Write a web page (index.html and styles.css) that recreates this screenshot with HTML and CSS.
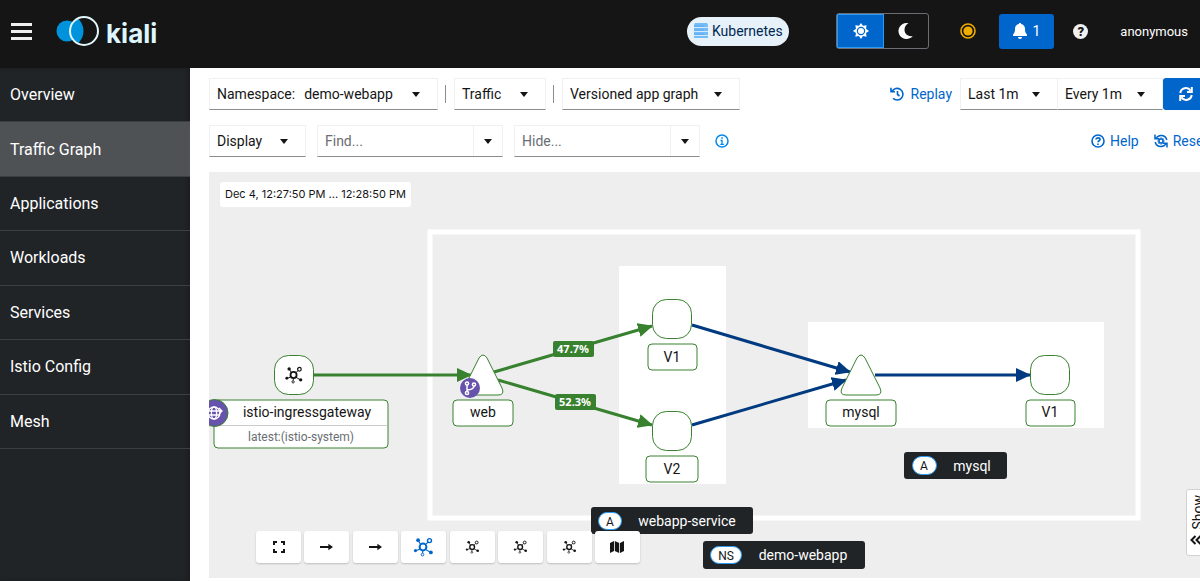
FILE: index.html
```html
<!DOCTYPE html>
<html lang="en">
<head>
    <meta charset="UTF-8">
    <meta name="viewport" content="width=device-width, initial-scale=1.0">
    <title>Kiali</title>
    <link rel="stylesheet" href="styles.css">
</head>
<body>
    <!-- shared icons -->
    <svg class="sprite" aria-hidden="true">
        <symbol id="topology" viewBox="0 0 20 20">
            <g fill="none" stroke="currentColor">
                <circle cx="9.5" cy="10" r="3.4" stroke-width="2"/>
                <circle cx="16" cy="3.6" r="2" stroke-width="1.4"/>
                <circle cx="9" cy="17.6" r="1.3" stroke-width="1"/>
                <path d="M12 7.6l2.6-2.6M7.2 7.6L5 4M6.8 12l-4 1.6M12 12.4l4.4 2.6M9.2 13v3" stroke-width="1.1"/>
            </g>
            <g fill="currentColor">
                <circle cx="4.6" cy="3.2" r="1.9"/>
                <circle cx="2" cy="13.6" r="1.6"/>
                <circle cx="17.4" cy="15.4" r="1.9"/>
            </g>
        </symbol>
        <symbol id="arrow" viewBox="0 0 14 8">
            <path d="M0 3h9V0.4L14 4 9 7.6V5H0z" fill="currentColor"/>
        </symbol>
    </svg>

    <header class="masthead">
        <button class="menu-button" aria-label="Menu"><span></span><span></span><span></span></button>
        <a class="logo" href="#">
            <svg width="44" height="32" viewBox="0 0 44 32" aria-hidden="true">
                <circle cx="11" cy="16" r="10.5" fill="#0093dd"/>
                <clipPath id="ring"><circle cx="28" cy="16" r="14"/></clipPath>
                <circle cx="11" cy="16" r="16.5" fill="#0093dd" clip-path="url(#ring)"/>
                <circle cx="28" cy="16" r="14" fill="none" stroke="#e3f6fc" stroke-width="2"/>
            </svg>
            <span>kiali</span>
        </a>
        <div class="tools">
            <span class="cluster">
                <svg width="14" height="16" viewBox="0 0 14 16" aria-hidden="true">
                    <path d="M1 0h12l1 2v13H0V2z" fill="#73bcf7"/>
                    <path d="M0 4.5h14M0 8.5h14M0 12.5h14" stroke="#d4eafc"/>
                    <path d="M0 3h10M0 7h10M0 11h10" stroke="#5aa9f2"/>
                </svg>
                Kubernetes
            </span>
            <div class="theme">
                <button class="selected" aria-label="Light theme">
                    <svg width="16" height="16" viewBox="0 0 16 16" aria-hidden="true">
                        <path d="M8 0l1.9 2.8 3.7-.6-.6 3.5L16 8l-3 2.1.6 3.7-3.7-.7L8 16l-2-2.9-3.7.7.7-3.7L0 8l3-2.3-.7-3.5 3.7.6z" fill="#fff"/>
                        <circle cx="8" cy="8" r="3.6" fill="#fff" stroke="#06c" stroke-width="1.2"/>
                    </svg>
                </button>
                <button aria-label="Dark theme">
                    <svg width="16" height="16" viewBox="0 0 16 16" aria-hidden="true">
                        <path d="M8.6 0A8 8 0 1 0 14.8 12.9C10 14 6.5 11 6.5 6.8 6.5 3.5 8.3 1.3 10.5.3z" fill="#fff"/>
                    </svg>
                </button>
            </div>
            <svg class="mesh-status" width="16" height="16" viewBox="0 0 16 16" aria-hidden="true">
                <circle cx="8" cy="8" r="7" fill="none" stroke="#f0ab00" stroke-width="1.6"/>
                <circle cx="8" cy="8" r="4.6" fill="#f0ab00"/>
            </svg>
            <button class="alerts" aria-label="Notifications">
                <svg width="14" height="16" viewBox="0 0 14 16" aria-hidden="true">
                    <path d="M6 0h2v1.1c2.6.4 4 2.3 4 4.9 0 3 .6 4.1 2 5.6V13H0v-1.4C1.4 10.100 2 9 2 6c0-2.600 1.400-4.500 4-4.900zM5 14h4a2 2 0 0 1-4 0z" fill="#fff"/>
                </svg>
                1
            </button>
            <button class="help-button" aria-label="Help">?</button>
            <a class="user" href="#">anonymous</a>
        </div>
    </header>

    <div class="page">
        <nav class="sidebar">
            <div class="nav-list">
                <a href="#">Overview</a>
                <a class="current" href="#">Traffic Graph</a>
                <a href="#">Applications</a>
                <a href="#">Workloads</a>
                <a href="#">Services</a>
                <a href="#">Istio Config</a>
                <a href="#">Mesh</a>
            </div>
        </nav>

        <main>
            <div class="toolbar">
                <div class="dropdown namespace">
                    <label for="namespace">Namespace:</label>
                    <select id="namespace"><option>demo-webapp</option></select>
                </div>
                <span class="divider"></span>
                <div class="dropdown traffic"><select aria-label="Traffic"><option>Traffic</option></select></div>
                <span class="divider"></span>
                <div class="dropdown graph-type"><select aria-label="Graph type"><option>Versioned app graph</option></select></div>
                <div class="right time">
                    <a class="action" href="#">
                        <svg width="14" height="14" viewBox="0 0 14 14" fill="none" stroke="#06c" stroke-width="1.6" aria-hidden="true">
                            <path d="M2 4.5A5.8 5.8 0 1 1 3 11.3M1 .8v4h4M7.5 4v3.5l2 1.5"/>
                        </svg>
                        Replay
                    </a>
                    <div class="dropdown duration"><select aria-label="Duration"><option>Last 1m</option></select></div>
                    <div class="dropdown interval"><select aria-label="Refresh interval"><option>Every 1m</option></select></div>
                    <button class="refresh" aria-label="Refresh">
                        <svg width="14" height="14" viewBox="0 0 14 14" fill="none" stroke="#fff" stroke-width="2" aria-hidden="true">
                            <path d="M1.3 6A5.6 5.6 0 0 1 11.5 3.6M12.7 8A5.6 5.6 0 0 1 2.5 10.4M12.8 0v5H8M1.2 14V9H6"/>
                        </svg>
                    </button>
                </div>
            </div>

            <div class="toolbar">
                <div class="dropdown display"><select aria-label="Display"><option>Display</option></select></div>
                <div class="search">
                    <input type="text" placeholder="Find..." aria-label="Find">
                    <button aria-label="Find presets"></button>
                </div>
                <div class="search">
                    <input type="text" placeholder="Hide..." aria-label="Hide">
                    <button aria-label="Hide presets"></button>
                </div>
                <svg class="info" width="14" height="14" viewBox="0 0 14 14" fill="none" stroke="#0088ee" aria-hidden="true">
                    <circle cx="7" cy="7" r="6" stroke-width="1.5"/>
                    <path d="M5.5 6.5H7v3.5M5.3 10.3h3.6" stroke-width="1.3"/>
                    <path d="M6.2 4h1.6" stroke-width="1.7"/>
                </svg>
                <div class="right links">
                    <a class="action" href="#">
                        <svg width="14" height="14" viewBox="0 0 14 14" fill="none" stroke="#06c" stroke-width="1.6" aria-hidden="true">
                            <circle cx="7" cy="7" r="6"/>
                            <path d="M5 5.6C5 3.3 9 3.4 9 5.5 9 6.9 7 6.7 7 8.3M7 9.4v1.6"/>
                        </svg>
                        Help
                    </a>
                    <a class="action" href="#">
                        <svg width="14" height="14" viewBox="0 0 14 14" fill="none" stroke="#06c" stroke-width="1.5" aria-hidden="true">
                            <path d="M2 4.5A5.8 5.8 0 0 1 12.8 6M12 9.5A5.8 5.8 0 0 1 1.2 8M1 .5v4.3h4M13 13.5V9.2H9"/>
                            <circle cx="7" cy="7" r="2"/>
                            <path d="M7 3.5v1M7 9.5v1M3.5 7h1M9.5 7h1M4.5 4.5l1 1M9.5 9.5l-1-1M9.5 4.5l-1 1M4.5 9.5l1-1"/>
                        </svg>
                        Reset
                    </a>
                </div>
            </div>

            <div class="graph">
                <svg class="canvas" width="991" height="406">
                    <defs>
                        <marker id="green-head" markerUnits="userSpaceOnUse" markerWidth="15" markerHeight="14" refX="14" refY="7" orient="auto">
                            <path d="M0 0L15 7 0 14z" fill="#38812f"/>
                        </marker>
                        <marker id="blue-head" markerUnits="userSpaceOnUse" markerWidth="15" markerHeight="14" refX="14" refY="7" orient="auto">
                            <path d="M0 0L15 7 0 14z" fill="#003a80"/>
                        </marker>
                        <path id="triangle" class="node" d="M-4 -17Q0 -23 4 -17L19 13Q22 20 15 20H-15Q-22 20 -19 13z"/>
                        <rect id="box" class="node" x="-19.5" y="-19.5" width="39" height="39" rx="14"/>
                    </defs>

                    <!-- namespace and app groups -->
                    <rect x="221" y="60" width="708" height="286" fill="none" stroke="#fff" stroke-width="5"/>
                    <rect x="410" y="94" width="107" height="218" fill="#fff"/>
                    <rect x="599" y="150" width="296" height="106" fill="#fff"/>

                    <!-- traffic -->
                    <path class="edge green" d="M105 203H262"/>
                    <path class="edge green" d="M285 200L443 154"/>
                    <path class="edge green" d="M289 208L443 253"/>
                    <path class="edge blue" d="M483 153L641 200"/>
                    <path class="edge blue" d="M483 253L637 208"/>
                    <path class="edge blue" d="M666 203H821"/>
                    <rect class="rate" x="344" y="169" width="41" height="16" rx="2"/>
                    <text class="rate-text" x="364" y="181">47.7%</text>
                    <rect class="rate" x="346" y="222" width="41" height="16" rx="2"/>
                    <text class="rate-text" x="366" y="234">52.3%</text>

                    <!-- nodes -->
                    <use href="#box" x="85" y="203"/>
                    <use href="#topology" class="node-icon" x="76" y="194" width="18" height="18"/>
                    <use href="#triangle" x="274" y="203"/>
                    <use href="#box" x="463" y="147"/>
                    <use href="#box" x="463" y="259"/>
                    <use href="#triangle" x="652" y="203"/>
                    <use href="#box" x="841" y="203"/>

                    <!-- labels -->
                    <rect class="node" x="5" y="228" width="174" height="48" rx="4"/>
                    <path d="M6 253.5h172" stroke="#ccc"/>
                    <text x="98" y="245">istio-ingressgateway</text>
                    <text class="sub" x="92" y="269">latest:(istio-system)</text>
                    <rect class="node" x="244" y="228" width="60" height="26" rx="4"/>
                    <text x="274" y="245">web</text>
                    <rect class="node" x="439" y="172" width="49" height="26" rx="4"/>
                    <text x="463" y="190">V1</text>
                    <rect class="node" x="437" y="284" width="52" height="26" rx="4"/>
                    <text x="463" y="302">V2</text>
                    <rect class="node" x="617" y="228" width="70" height="26" rx="4"/>
                    <text x="652" y="245">mysql</text>
                    <rect class="node" x="817" y="228" width="49" height="26" rx="4"/>
                    <text x="841" y="245">V1</text>

                    <!-- badges -->
                    <circle cx="5.5" cy="241" r="13.5" fill="#6753ac" stroke="#38812f"/>
                    <g fill="none" stroke="#fff" stroke-width="1.3">
                        <circle cx="5" cy="241" r="6"/>
                        <ellipse cx="5" cy="241" rx="2.6" ry="6"/>
                        <path d="M-1 239h14M-1 243h11M10 236l3 3-3 3"/>
                    </g>
                    <circle cx="261" cy="216" r="10" fill="#6753ac"/>
                    <g fill="none" stroke="#fff" stroke-width="1.5">
                        <circle cx="258" cy="211.5" r="1.6"/>
                        <circle cx="265" cy="212.5" r="1.6"/>
                        <circle cx="258" cy="221" r="1.6"/>
                        <path d="M258 213v6.5M265 214q0 3.5-7 4"/>
                    </g>

                    <!-- group tags -->
                    <rect class="tag" x="382" y="335" width="162" height="27" rx="3"/>
                    <rect class="pill" x="389.5" y="340.5" width="23" height="17" rx="8.5"/>
                    <text class="pill-text" x="401" y="354">A</text>
                    <text class="tag-text" x="478" y="354">webapp-service</text>
                    <rect class="tag" x="494" y="369" width="162" height="28" rx="3"/>
                    <rect class="pill" x="501.5" y="374.5" width="31" height="17" rx="8.5"/>
                    <text class="pill-text" x="517" y="388">NS</text>
                    <text class="tag-text" x="594" y="388">demo-webapp</text>
                    <rect class="tag" x="695" y="280" width="103" height="27" rx="3"/>
                    <rect class="pill" x="703.5" y="284.5" width="24" height="18" rx="9"/>
                    <text class="pill-text" x="715" y="298">A</text>
                    <text class="tag-text" x="763" y="299">mysql</text>
                </svg>

                <div class="time-range">Dec 4, 12:27:50 PM ... 12:28:50 PM</div>

                <div class="graph-tools">
                    <button aria-label="Zoom to fit">
                        <svg width="12" height="12" viewBox="0 0 12 12" fill="none" stroke="currentColor" stroke-width="2"><path d="M1 4V1h3M8 1h3v3M11 8v3H8M4 11H1V8"/></svg>
                    </button>
                    <button aria-label="Hide healthy edges"><svg width="13" height="8"><use href="#arrow"/></svg></button>
                    <button aria-label="Hide unhealthy edges"><svg width="13" height="8"><use href="#arrow"/></svg></button>
                    <button class="active" aria-label="Default layout"><svg width="21" height="20"><use href="#topology"/></svg></button>
                    <button aria-label="Layout 1"><svg width="15" height="14"><use href="#topology"/></svg></button>
                    <button aria-label="Layout 2"><svg width="15" height="14"><use href="#topology"/></svg></button>
                    <button aria-label="Layout 3"><svg width="15" height="14"><use href="#topology"/></svg></button>
                    <button aria-label="Legend">
                        <svg width="14" height="12" viewBox="0 0 14 12" fill="currentColor"><path d="M0 2l4-2v10l-4 2zM4.8 0l4.4 2v10l-4.4-2zM10 2l4-2v10l-4 2z"/></svg>
                    </button>
                </div>

                <button class="show-panel">
                    <span>Show</span>
                    <svg width="12" height="10" viewBox="0 0 12 10" fill="none" stroke="#151515" stroke-width="2"><path d="M5.5 1l-4 4 4 4M10.5 1l-4 4 4 4"/></svg>
                </button>
            </div>
        </main>
    </div>
</body>
</html>
```
FILE: styles.css
```css
* {
    box-sizing: border-box;
}

body {
    margin: 0;
    min-height: 100vh;
    display: flex;
    flex-direction: column;
    overflow: hidden;
    font-family: Roboto, 'Liberation Sans', sans-serif;
    font-size: 14px;
    color: #151515;
    background-color: #fff;
}

a {
    text-decoration: none;
}

button, select, input {
    font: inherit;
    color: inherit;
    margin: 0;
    padding: 0;
    border: none;
    border-radius: 0;
    background: none;
}

button {
    cursor: pointer;
}

.sprite {
    position: absolute;
    width: 0;
    height: 0;
}

/* masthead */
.masthead {
    display: flex;
    align-items: center;
    height: 68px;
    padding: 0 12px 6px 11px;
    background-color: #151515;
    color: #fff;
}

.menu-button {
    display: flex;
    flex-direction: column;
    gap: 4px;
    width: 21px;
    margin-right: 24px;
}

.menu-button span {
    width: 100%;
    height: 3px;
    background-color: #f0f0f0;
}

.logo {
    display: flex;
    align-items: center;
    gap: 6px;
    font-family: Inter, sans-serif;
    font-size: 26px;
    font-weight: 700;
    color: #ddf6ff;
}

.logo span {
    padding-top: 4px;
}

.tools {
    display: flex;
    align-items: center;
    margin-left: auto;
}

.cluster {
    display: flex;
    align-items: center;
    justify-content: center;
    gap: 4px;
    width: 102px;
    height: 29px;
    margin-right: 47px;
    border-radius: 15px;
    background-color: #e7f1fa;
    color: #002952;
}

.theme {
    display: flex;
    width: 93px;
    height: 36px;
    margin-right: 31px;
    border: 1px solid #6a6e73;
    border-radius: 3px;
}

.theme button {
    flex: 1;
    display: flex;
    align-items: center;
    justify-content: center;
}

.theme .selected {
    background-color: #06c;
    border: 1px solid #2b9af3;
}

.mesh-status {
    margin-right: 23px;
}

.alerts {
    display: flex;
    align-items: center;
    justify-content: center;
    gap: 5px;
    width: 55px;
    height: 35px;
    margin-right: 19px;
    border-radius: 3px;
    background-color: #06c;
}

.help-button {
    width: 15px;
    height: 15px;
    margin-right: 32px;
    border-radius: 50%;
    background-color: #f0f0f0;
    color: #151515;
    font-size: 13px;
    font-weight: 900;
    line-height: 15px;
}

.user {
    color: #fff;
    font-size: 13px;
}

/* page */
.page {
    flex: 1;
    display: flex;
}

.sidebar {
    flex: none;
    width: 190px;
    background-color: #212427;
    box-shadow: inset -3px 0 4px rgba(0, 0, 0, 0.2);
    font-size: 16px;
}

.nav-list {
    display: flex;
    flex-direction: column;
    min-height: 381px;
}

.nav-list a {
    flex: 1;
    display: flex;
    align-items: center;
    padding: 0 10px;
    border-bottom: 1px solid #3c3f42;
    color: #fff;
}

.nav-list .current {
    background-color: #4f5255;
}

main {
    flex: 1;
    min-width: 0;
    padding: 10px 0 3px 19px;
    overflow: hidden;
}

.toolbar {
    display: flex;
    align-items: center;
    height: 32px;
    margin: 0 -8px 15px 0;
}

.dropdown {
    position: relative;
    display: flex;
    align-items: center;
    height: 32px;
    border: 1px solid #f0f0f0;
    border-bottom-color: #8a8d90;
}

.dropdown select {
    flex: 1;
    min-width: 0;
    height: 30px;
    padding: 0 30px 0 7px;
    appearance: none;
}

.dropdown label {
    padding: 0 2px 0 7px;
}

.dropdown::after {
    content: '';
    position: absolute;
    right: 17px;
    border: 4px solid transparent;
    border-top: 5px solid #151515;
    border-bottom: none;
    pointer-events: none;
}

.namespace {
    width: 229px;
}

.traffic {
    width: 92px;
}

.graph-type {
    width: 178px;
}

.display {
    width: 97px;
}

.duration {
    width: 98px;
    margin-left: 8px;
}

.interval {
    width: 105px;
    border-left: none;
}

.divider {
    width: 1px;
    height: 18px;
    margin: 0 8px 0 7px;
    background-color: #8a8d90;
}

.right {
    display: flex;
    align-items: center;
    margin-left: auto;
}

.links {
    gap: 15px;
}

.action {
    display: flex;
    align-items: center;
    gap: 5px;
    color: #06c;
}

.time .action {
    gap: 7px;
}

.refresh {
    width: 45px;
    height: 32px;
    border-radius: 3px;
    background-color: #06c;
}

.refresh svg {
    display: block;
    margin: 0 auto;
}

.search {
    display: flex;
    width: 186px;
    height: 32px;
    margin-left: 11px;
    border: 1px solid #f0f0f0;
    border-bottom-color: #8a8d90;
}

.search input {
    flex: 1;
    min-width: 0;
    padding: 0 7px;
}

.search input::placeholder {
    color: #6a6e73;
}

.search button {
    display: flex;
    align-items: center;
    justify-content: center;
    width: 29px;
    border-left: 1px solid #f0f0f0;
}

.search button::after {
    content: '';
    border: 4px solid transparent;
    border-top: 5px solid #151515;
    border-bottom: none;
}

.info {
    margin-left: 15px;
}

/* graph */
.graph {
    position: relative;
    height: 406px;
    background-color: #eee;
    overflow: hidden;
}

.canvas {
    display: block;
    font-size: 14px;
    text-anchor: middle;
}

.canvas text {
    fill: #151515;
}

.canvas .sub {
    fill: #6a6e73;
    font-size: 12px;
}

.node {
    fill: #fff;
    stroke: #38812f;
    stroke-width: 1;
}

.node-icon {
    color: #151515;
}

.edge {
    fill: none;
    stroke-width: 3;
}

.green {
    stroke: #38812f;
    marker-end: url(#green-head);
}

.blue {
    stroke: #003a80;
    marker-end: url(#blue-head);
}

.rate {
    fill: #38812f;
}

.canvas .rate-text {
    fill: #fff;
    font-family: 'Noto Sans', sans-serif;
    font-size: 11px;
    font-weight: 700;
}

.tag {
    fill: #212427;
}

.canvas .tag-text {
    fill: #fff;
}

.pill {
    fill: #fff;
    stroke: #2b9af3;
}

.canvas .pill-text {
    font-size: 12px;
}

.time-range {
    position: absolute;
    top: 10px;
    left: 11px;
    padding: 0 5px;
    border-radius: 3px;
    background-color: #fff;
    font-family: Inter, sans-serif;
    font-size: 11px;
    line-height: 25px;
}

.graph-tools {
    position: absolute;
    bottom: 15px;
    left: 47px;
    display: flex;
    justify-content: space-between;
    width: 384px;
}

.graph-tools button {
    display: flex;
    align-items: center;
    justify-content: center;
    width: 45px;
    height: 32px;
    border-radius: 3px;
    background-color: #fff;
    box-shadow: 0 1px 2px rgba(0, 0, 0, 0.2);
}

.graph-tools .active {
    color: #06c;
}

.show-panel {
    position: absolute;
    right: -8px;
    bottom: 22px;
    display: flex;
    flex-direction: column;
    align-items: flex-start;
    justify-content: flex-end;
    gap: 5px;
    width: 22px;
    height: 67px;
    padding: 0 0 10px 3px;
    border: 1px solid #d2d2d2;
    border-radius: 3px;
    background-color: #fff;
}

.show-panel span {
    writing-mode: vertical-rl;
    transform: rotate(180deg);
}
```
